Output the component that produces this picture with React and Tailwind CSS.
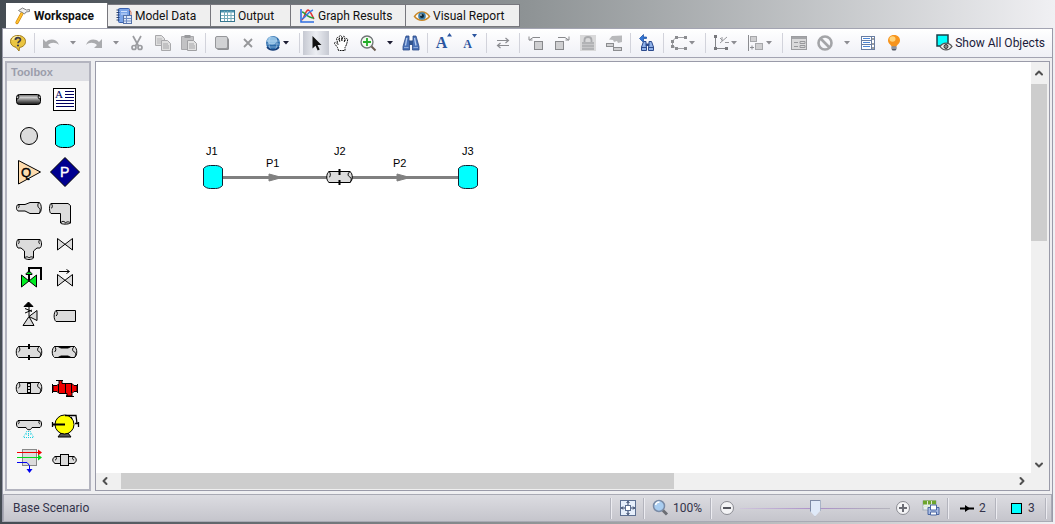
import { ChevronDown, ChevronLeft, ChevronRight, ChevronUp } from "lucide-react";

const PIPE = "#dcdcdc";

/* ---------- shared bits ---------- */

function Icon({ size = 18, children }) {
  return (
    <svg width={size} height={size} viewBox={`0 0 ${size} ${size}`} fill="none" className="shrink-0" aria-hidden="true">
      {children}
    </svg>
  );
}

function Caret({ dark }) {
  return (
    <svg width="6" height="4" viewBox="0 0 6 4" className="shrink-0" aria-hidden="true">
      <path d="M0 0h6L3 3.5z" fill={dark ? "#1d1d33" : "#8d8d92"} />
    </svg>
  );
}

function Tool({ label, active, children }) {
  return (
    <button
      type="button"
      aria-label={label}
      className={
        active
          ? "flex h-6 w-[26px] shrink-0 items-center justify-center bg-linear-to-r from-[#c6c9d2] via-[#eceef3] to-[#c6c9d2]"
          : "flex h-6 w-[26px] shrink-0 items-center justify-center"
      }
    >
      {children}
    </button>
  );
}

function DropTool({ label, dark, children }) {
  return (
    <button type="button" aria-label={label} className="flex h-6 w-[35px] shrink-0 items-center gap-px pl-[3px]">
      {children}
      <Caret dark={dark} />
    </button>
  );
}

function CaretTool({ label, dark }) {
  return (
    <button type="button" aria-label={label} className="flex h-6 w-[17px] shrink-0 items-center justify-center">
      <Caret dark={dark} />
    </button>
  );
}

function Sep() {
  return <span className="mx-[3px] h-5 w-px shrink-0 bg-[#d2d3db]" />;
}

/* ---------- tabs ---------- */

const tabs = [
  {
    name: "Workspace",
    width: "w-[102px]",
    icon: (
      <Icon>
        <path d="M8.500 5.500 3 15.500" stroke="#c87d00" strokeWidth="3.200" strokeLinecap="round" />
        <path d="M8.500 5.500 3 15.500" stroke="#ffc02e" strokeWidth="2" strokeLinecap="round" />
        <path d="m4.500 3.500 4-2.500 4 2 3-.5v2l-3.500.5-1.500 2-3-2-1.500-.5z" fill="#eee" stroke="#777" strokeWidth=".9" />
      </Icon>
    ),
  },
  {
    name: "Model Data",
    width: "w-[103px]",
    icon: (
      <Icon>
        <rect x="3.500" y="1.500" width="11" height="14" rx="1" fill="#7ba4e8" stroke="#3a62b0" />
        <path d="M6 4.500h6M6 7h6" stroke="#d0e0fc" />
        <path d="M1.500 3h3M1.500 5.500h3M1.500 8h3M1.500 10.500h3M1.500 13h3" stroke="#27406f" />
        <rect x="8.500" y="8.500" width="8" height="8" fill="#dfe8f8" stroke="#5672a8" />
        <path d="M9 11.500h7M9 14h7M11.500 9v7" stroke="#6f8cc4" />
        <path d="m14.500 3 1.500 2v3" stroke="#d3705a" />
      </Icon>
    ),
  },
  {
    name: "Output",
    width: "w-20",
    icon: (
      <Icon>
        <rect x="2.500" y="3.500" width="14" height="11" fill="#fff" stroke="#36758f" />
        <path d="M3 4.500h13" stroke="#4a93ae" strokeWidth="2" />
        <path d="M3 8.500h13M3 11.500h13M6.500 4v10M9.500 4v10M13 4v10" stroke="#76abb9" />
      </Icon>
    ),
  },
  {
    name: "Graph Results",
    width: "w-[115px]",
    icon: (
      <Icon>
        <path d="M3 2v13h13" stroke="#2f6de0" strokeWidth="1.600" />
        <path d="M4 13c3-3 3-9 6-10 2 0 3 4 6 9" stroke="#e13434" strokeWidth="1.500" />
        <path d="M4 5c3 0 5 6 12 6" stroke="#2b9c3a" strokeWidth="1.500" />
        <path d="M4 12c4-1 5-7 11-9" stroke="#3a78e6" strokeWidth="1.500" />
      </Icon>
    ),
  },
  {
    name: "Visual Report",
    width: "w-[114px]",
    icon: (
      <Icon>
        <path d="M1.500 9.500c4-6 11-6 15 0-4 5-11 5-15 0z" fill="#fffaf0" stroke="#c98726" strokeWidth="1.500" />
        <circle cx="9" cy="9" r="3.800" fill="#3c7ca8" />
        <circle cx="9" cy="9" r="2" fill="#10242f" />
        <circle cx="8" cy="8" r=".8" fill="#fff" />
      </Icon>
    ),
  },
];

function Tabs() {
  return (
    <nav className="flex h-7 items-end pl-1">
      {tabs.map((tab, i) => (
        <button
          key={tab.name}
          type="button"
          className={`${tab.width} ${
            i === 0
              ? "flex h-[25px] items-center gap-0.5 border-r border-[#77777d] bg-white pl-2 font-bold"
              : "mb-px flex h-[23px] items-center gap-0.5 border border-l-0 border-[#77777d] bg-[#efefef] pl-[7px]"
          }`}
        >
          {tab.icon}
          <span className="whitespace-nowrap">{tab.name}</span>
        </button>
      ))}
    </nav>
  );
}

/* ---------- toolbar ---------- */

function Toolbar() {
  return (
    <div className="flex h-[30px] items-center border-t border-b border-[#a3a4b2] bg-linear-to-b from-white to-[#eff0f6] pr-[7px] pl-0.5">
      <Tool label="Help">
        <Icon>
          <path d="M9 1.500c4.500 0 7.500 2.500 7.500 6 0 3.300-2.500 5.500-6 6L10 17l-3-3.700c-3.300-.6-5.500-2.800-5.500-5.800 0-3.500 3-6 7.500-6z" fill="#eac541" stroke="#9f7a1a" />
          <path d="M3.500 6C4.500 3 8 2.200 11 3" stroke="#fff3b0" strokeWidth="1.500" />
          <path d="M6.500 6c0-3 5-3 5-.3C11.500 7.500 9 7.500 9 9.300" stroke="#3c3a4c" strokeWidth="1.700" />
          <circle cx="9" cy="11.500" r="1.100" fill="#3c3a4c" />
        </Icon>
      </Tool>
      <Sep />
      <Tool label="Undo">
        <Icon>
          <path d="M1 5v9h8l-3-3c3-3 8-3 11 0-2-6-9-7-13-3z" fill="#aaabae" />
        </Icon>
      </Tool>
      <CaretTool label="Undo list" />
      <Tool label="Redo">
        <Icon>
          <path d="M17 5v9H9l3-3C9 8 4 8 1 11c2-6 9-7 13-3z" fill="#aaabae" />
        </Icon>
      </Tool>
      <CaretTool label="Redo list" />
      <Tool label="Cut">
        <Icon>
          <path d="m5 2 5.500 10M13 2 7.500 12" stroke="#9b9ca0" strokeWidth="1.700" />
          <circle cx="6" cy="13.500" r="2" stroke="#9b9ca0" strokeWidth="1.700" />
          <circle cx="12" cy="13.500" r="2" stroke="#9b9ca0" strokeWidth="1.700" />
        </Icon>
      </Tool>
      <Tool label="Copy">
        <Icon>
          <path d="M1.500 1.500h6l3 3v7h-9z" fill="#dedede" stroke="#a8a8ab" />
          <path d="M3 5h5M3 7h5M3 9h5" stroke="#b5b5b8" />
          <path d="M7.500 6.500h6l3 3v7h-9z" fill="#dedede" stroke="#a8a8ab" />
          <path d="M9 10h5M9 12h6M9 14h6" stroke="#a5a5a8" />
        </Icon>
      </Tool>
      <Tool label="Paste">
        <Icon>
          <path d="M1.500 2.500h12v13h-12z" fill="#c2c2c4" stroke="#a8a8ab" />
          <path d="M4.500 1h6v3h-6z" fill="#98999c" />
          <path d="M7.500 6.500h6l3 3v7h-9z" fill="#e2e2e2" stroke="#a0a0a3" />
          <path d="M9 10h5M9 12h6M9 14h6" stroke="#a5a5a8" />
        </Icon>
      </Tool>
      <Sep />
      <Tool label="Duplicate">
        <Icon>
          <rect x="4" y="4" width="12" height="12" rx="1.500" fill="#8f9093" />
          <rect x="2.500" y="2.500" width="12" height="12" rx="1.500" fill="#d1d2d4" stroke="#96979a" />
        </Icon>
      </Tool>
      <Tool label="Delete">
        <Icon>
          <path d="m5 5 8 8M13 5l-8 8" stroke="#96979a" strokeWidth="1.800" />
        </Icon>
      </Tool>
      <DropTool label="Web" dark>
        <Icon>
          <circle cx="9" cy="9" r="7" fill="#2c6dac" />
          <ellipse cx="8" cy="6.500" rx="5" ry="4" fill="#8fbfe4" />
          <path d="M2.500 7h13M2.500 10h13M4 13h10M6.500 2.500c-2 4-2 9 0 13M11.500 2.500c2 4 2 9 0 13" stroke="#c8e0f4" strokeOpacity=".5" />
          <path d="M3 13c3 4 9 4 12 0" stroke="#153d78" strokeWidth="1.500" />
        </Icon>
      </DropTool>
      <Sep />
      <Tool label="Select" active>
        <Icon>
          <path d="M5.500 2v12.500l3-2.800 2.200 4.800 2-.9-2.200-4.700h4z" fill="#111" />
        </Icon>
      </Tool>
      <Tool label="Pan">
        <Icon>
          <path
            d="m5.500 16.500-1-3-3-4c-.4-1.500 1.300-1.500 2-.5l1.500 1.500-1.500-6c.2-1.300 1.700-1.300 2 0l1.200 3-.4-5c.3-1.300 1.900-1.300 2.200 0l.3 4.500 1-4c.5-1.200 2-.9 2 .4l-.5 4.600 1.500-3c.8-1 2-.3 1.800.8-.6 4-1.600 6-2.600 7.700v3z"
            fill="#fff"
            stroke="#111"
            strokeDasharray="1.800 .7"
          />
        </Icon>
      </Tool>
      <Tool label="Zoom in">
        <Icon>
          <circle cx="8" cy="8" r="6" fill="#f2fbef" stroke="#707376" strokeWidth="1.300" />
          <path d="M8 4v8M4 8h8" stroke="#24ad28" strokeWidth="1.800" />
          <path d="m12.500 12.500 4 4" stroke="#6b5c50" strokeWidth="2" />
        </Icon>
      </Tool>
      <CaretTool label="Zoom list" dark />
      <Tool label="Find">
        <Icon>
          <path d="M4 2h3v4l.5 2v8H1v-3.500zM11 2h3l3 10.500V16h-6.500V8l.5-2z" fill="#4a72b8" stroke="#2c4a86" strokeWidth=".8" />
          <path d="M7 6.500h4V11H7z" fill="#31548f" />
          <path d="M4.800 4 3.500 11.500M12.500 4l1.500 7.500" stroke="#b6cdf0" strokeWidth="1.300" />
          <path d="M2 13.500h4.500M11.500 13.500H16" stroke="#8fabd9" />
        </Icon>
      </Tool>
      <Sep />
      <Tool label="Increase font size">
        <span className="flex font-['Liberation_Serif',serif] text-[16px] leading-5 font-bold text-[#2b559f]">
          A
          <svg width="5" height="4" viewBox="0 0 5 4" aria-hidden="true">
            <path d="M0 3.500h5L2.500 0z" fill="#2b559f" />
          </svg>
        </span>
      </Tool>
      <Tool label="Decrease font size">
        <span className="flex items-end font-['Liberation_Serif',serif] text-[12px] leading-4 font-bold text-[#2b559f]">
          A
          <svg width="5" height="14" viewBox="0 0 5 14" className="mb-1" aria-hidden="true">
            <path d="M0 0h5L2.500 3.500z" fill="#2b559f" />
          </svg>
        </span>
      </Tool>
      <Sep />
      <Tool label="Reverse">
        <Icon>
          <path d="M3 6.500h11M4 11.500h11M11.500 4l3 2.500-3 2.500M6.500 9l-3 2.500 3 2.500" stroke="#8b8c90" strokeWidth="1.200" />
        </Icon>
      </Tool>
      <Sep />
      <Tool label="Rotate left">
        <Icon>
          <rect x="7.500" y="7.500" width="8" height="8" fill="#cfcfd1" stroke="#88898c" />
          <path d="M13 3.500H6L2.500 6M2 2.500V6h3.500" stroke="#88898c" />
        </Icon>
      </Tool>
      <Tool label="Rotate right">
        <Icon>
          <rect x="2.500" y="7.500" width="8" height="8" fill="#cfcfd1" stroke="#88898c" />
          <path d="M5 3.500h7L15.500 6M16 2.500V6h-3.500" stroke="#88898c" />
        </Icon>
      </Tool>
      <Tool label="Lock">
        <Icon>
          <rect x="1" y="1" width="16" height="16" fill="#d9d9da" />
          <path d="M5.500 8V6c0-4 7-4 7 0v2" stroke="#a9aaad" strokeWidth="1.800" />
          <rect x="3" y="8" width="12" height="8" fill="#b2b3b5" />
          <path d="M3 10.500h12M3 13.500h12" stroke="#c6c6c8" />
        </Icon>
      </Tool>
      <Tool label="Customize">
        <Icon>
          <path d="M4 5.500 7 2l10-.500V8l-4 1-1-2-3 1-1-2z" fill="#b8b9bb" />
          <rect x="1.500" y="9.500" width="7" height="3" fill="#d0d0d2" stroke="#8c8d90" />
          <rect x="8.500" y="13.500" width="8" height="3" fill="#d0d0d2" stroke="#8c8d90" />
        </Icon>
      </Tool>
      <Sep />
      <Tool label="Find previous">
        <Icon>
          <path d="m1.500 4.500 4-4v2.500h3v1.500h-3v4z" fill="#3276d6" stroke="#174b9f" strokeWidth=".7" />
          <path d="M5.500 7.500h2.500v4l.5 1.500v3.500H3.500V13zM11 7.500h2.500l2 5.500v3.500h-5V13l.5-1.500z" fill="#8eb0e8" stroke="#2c4a8c" />
          <path d="M8 9.500h3v2.500H8z" fill="#2c4a8c" />
          <path d="M4 13.500h4M11 13.500h4" stroke="#2c4a8c" />
        </Icon>
      </Tool>
      <Sep />
      <DropTool label="Pipe segments">
        <Icon>
          <path d="M15 3.500H6L2.500 7v4L6 14.500h9" stroke="#a0a1a5" />
          <path d="M5 2h3v3H5zM14 2h3v3h-3zM1 6h3v3H1zM1 11h3v3H1zM5 13h3v3H5zM14 13h3v3h-3z" fill="#8b8c90" />
        </Icon>
      </DropTool>
      <Sep />
      <DropTool label="Scale">
        <Icon>
          <path d="M3.500 3v11.500H15" stroke="#85868a" />
          <path d="m8 9 7-6M8 4l3 3M13 8.500h4M10 3v4" stroke="#97989c" />
          <path d="M2 1h3v3H2zM2 13h3v3H2zM13 13h3v3h-3z" fill="#77787c" />
        </Icon>
      </DropTool>
      <DropTool label="Align">
        <Icon>
          <path d="M1.500 1v16M3 13.500h4M5 11.500v4" stroke="#8b8c90" />
          <rect x="3.500" y="2.500" width="6" height="5" fill="#cfcfd1" stroke="#a6a7aa" />
          <rect x="8.500" y="9.500" width="7" height="6" fill="#cfcfd1" stroke="#a6a7aa" />
        </Icon>
      </DropTool>
      <Sep />
      <Tool label="Properties">
        <Icon>
          <rect x="1.500" y="2.500" width="15" height="13" fill="#dadadb" stroke="#9c9da0" />
          <path d="M2 4h14" stroke="#a4a5a8" strokeWidth="2" />
          <path d="M4 8.500h4M10 7.500h5v2h-5zM4 12.500h4M10 11.500h5v2h-5z" stroke="#98999c" />
        </Icon>
      </Tool>
      <Tool label="Disable">
        <Icon>
          <circle cx="9" cy="9" r="6.500" stroke="#a4a5a8" strokeWidth="2.600" />
          <path d="m4.500 4.500 9 9" stroke="#a4a5a8" strokeWidth="2.600" />
        </Icon>
      </Tool>
      <CaretTool label="Disable list" />
      <Tool label="Inspector">
        <Icon>
          <rect x="2.500" y="2.500" width="13" height="13" fill="#fff" stroke="#6a7ea2" />
          <path d="M12.500 3v12M2.500 6.500h10v4h-10z" stroke="#6a7ea2" />
          <path d="M4 4.500h7M4 8.500h7M4 12.500h7" stroke="#4b86d8" />
          <path d="M14 4v2M14 9v2M14 13v2" stroke="#444" />
        </Icon>
      </Tool>
      <Tool label="Hints">
        <Icon>
          <path d="M9 1c4 0 6 2.500 6 5.500 0 3-3 4-3.500 6h-5C6 10.500 3 9.500 3 6.500 3 3.500 5 1 9 1z" fill="#f7941d" />
          <ellipse cx="7.500" cy="5" rx="3" ry="2.800" fill="#ffd37a" />
          <path d="M6.500 12.500h5V15l-1 1.500h-3L6.500 15z" fill="#555a66" />
          <path d="M6.500 14h5" stroke="#c9ced8" />
        </Icon>
      </Tool>
      <button type="button" className="ml-auto flex shrink-0 items-center gap-0.5 whitespace-nowrap text-[#1b1b3a]">
        <Icon>
          <rect x="2" y="1" width="11" height="11" fill="#00ffff" stroke="#1b3f48" strokeWidth="1.500" />
          <path d="M5 12.500c3-4.500 9-4.500 12 0-3 4.500-9 4.500-12 0z" fill="#eee" stroke="#555" strokeWidth="1.300" />
          <circle cx="11" cy="12.500" r="2" fill="#888" stroke="#333" />
        </Icon>
        Show All Objects
      </button>
    </div>
  );
}

/* ---------- toolbox ---------- */

const shapes = [
  [
    "Pipe",
    <>
      <defs>
        <linearGradient id="pipe" x2="0" y2="1">
          <stop stopColor="#666" />
          <stop offset=".3" stopColor="#ccc" />
          <stop offset=".6" stopColor="#777" />
          <stop offset="1" stopColor="#111" />
        </linearGradient>
      </defs>
      <rect x="5.500" y="13.500" width="24" height="10" rx="3" fill="url(#pipe)" />
      <path d="M6 18c2 0 2-2 1.500-4M29 18c-2 0-2-2-1.500-4" />
    </>,
  ],
  [
    "Annotation",
    <>
      <rect x="6.500" y="7.500" width="22" height="22" fill="#fff" />
      <path d="M18 10.500h9M18 13.500h9M18 16.500h9M9 19.500h18M9 22.500h18M9 25.500h18" stroke="#000060" />
      <text x="8" y="17" fontSize="11" fill="#000060" stroke="none" fontFamily="Liberation Serif, serif">
        A
      </text>
    </>,
  ],
  ["Branch", <circle cx="18" cy="19" r="8.500" fill={PIPE} />],
  ["Reservoir", <path d="M8.500 10.500c2-2 4-3 7-3h5c3 0 5 1 7 3v17c-2 2-4 3-7 3h-5c-3 0-5-1-7-3z" fill="#00ffff" />],
  [
    "Assigned Flow",
    <>
      <path d="m7.500 7.500 22 11.500-22 12z" fill="#ffdcae" />
      <text x="10" y="24" fontSize="13" fill="#000" stroke="#000" strokeWidth=".4">
        Q
      </text>
    </>,
  ],
  [
    "Assigned Pressure",
    <>
      <path d="m18 4.500 14.500 14.500L18 33.500 3.500 19z" fill="#000090" />
      <text x="13" y="24" fontSize="14" fill="#fff" stroke="#fff" strokeWidth=".4">
        P
      </text>
    </>,
  ],
  [
    "Area Change",
    <>
      <path d="M7 15.500h7l5-2h9c3 1 3 10 0 11h-9l-5-2.500H7c-2-1-2-5.500 0-6.500z" fill={PIPE} />
      <path d="M7 15.500c2 1 1 3 0 3.500M28 13.500c-2 2-1 5 0 5.500 2 1 1 4 0 5.500" />
    </>,
  ],
  [
    "Bend",
    <>
      <path d="M4 14.500h17l2.500 2V34c-2 1.500-9 1.500-10 0V24.500H4c-2-1-2-9 0-10z" fill={PIPE} />
      <path d="M4 14.500c2 2 1.500 4 0 5M13.500 34c2-3 5-1 5 0 2-2 4-1 5 0" />
    </>,
  ],
  [
    "Tee",
    <>
      <path d="M7 14.500h22c2 2 2 7 0 8.500h-3l-3.500 3v7c-2 2-7 2-9 0v-7L10 23H7c-2-2-2-6.500 0-8.500z" fill={PIPE} />
      <path d="M7 14.500c2 2 1 4 0 4.500M29 14.500c-2 2-1 4 0 4.500M13.500 33c2-2 4-1 4.500 0 2-2 4-1 4.500 0" />
    </>,
  ],
  ["Valve", <path d="m10.500 13.500 15 11.500V13.500L10.500 25z" fill={PIPE} />],
  [
    "Control Valve",
    <>
      <path d="M18 18V7h12v12" strokeWidth="2" />
      <path d="m10.500 14 15 12V14l-15 12z" fill="#00ee22" />
      <path d="M15 13.500c0-3.500 6-3.500 6 0z" fill="#00ee22" />
      <path d="M18 14v5" strokeWidth="2" />
    </>,
  ],
  [
    "Check Valve",
    <>
      <path d="m10.500 13.500 15 11.500V13.500L10.500 25z" fill={PIPE} />
      <path d="M12 10.500h10M19.500 8.500l3 2-3 2" />
    </>,
  ],
  [
    "Relief Valve",
    <>
      <path d="m18 19.500-6 9h11zM18 19.500l8-6v10z" fill={PIPE} />
      <path d="M18 19V9M14 11.500l7 3M14 16l7-3" />
      <path d="m17.500 5-4.500 4.500h9z" fill="#000" />
    </>,
  ],
  [
    "Dead End",
    <>
      <path d="M9 13.500h19.500v11H9c-2.500-2-2.500-9 0-11z" fill={PIPE} />
      <path d="M9 13.500c2 2 1.500 4.500 0 5.500" />
    </>,
  ],
  [
    "Orifice",
    <>
      <path d="M7.500 13.500h21c3 2 3 9 0 11h-21c-3-2-3-9 0-11z" fill={PIPE} />
      <path d="M7.500 13.500c2 2 1.500 4.500 0 5.500M28.500 13.500c-3 2-2 5 0 5.500 2 1 1 4 0 5.500" />
      <path d="M18 11v5M18 22v5" strokeWidth="2" />
    </>,
  ],
  [
    "Venturi",
    <>
      <path d="M7.500 13.500h20c3 2 3 9 0 11h-20c-3-2-3-9 0-11z" fill={PIPE} />
      <path d="M11 13.500h13l-3 1.500h-7zM11 24.500h13l-3-1.500h-7z" fill="#000" />
      <path d="M7.500 13.500c2 2 1.500 4.500 0 5.500M27.500 13.500c-3 2-2 5 0 5.500 2 1 1 4 0 5.500" />
    </>,
  ],
  [
    "Screen",
    <>
      <path d="M7.500 13.500h21c3 2 3 9 0 11h-21c-3-2-3-9 0-11z" fill={PIPE} />
      <path d="M7.500 13.500c2 2 1.500 4.500 0 5.500M28.500 13.500c-3 2-2 5 0 5.500 2 1 1 4 0 5.500M16.500 14v10M19.500 14v10" />
      <path d="M18 14v10" strokeDasharray="1 2" strokeWidth="2" />
    </>,
  ],
  [
    "Heat Exchanger",
    <>
      <path d="M6 16.500h4l2-2v-3h-2 5v3h10l2 2h3v6h-3l-2 2v2.500h-6 1v-2.500h-8l-2-2H6z" fill="#f00000" />
      <path d="M5.500 15v9M30.500 15v9M9 11.500h7M19 27.500h8" />
      <path d="M11.500 15v9M18.500 15v9M24.500 15v9" />
    </>,
  ],
  [
    "Spray Discharge",
    <>
      <path d="M7 15.500h22c2 1.500 2 5.500 0 7h-8c-1 3-5 3-6 0H7c-2-1.500-2-5.500 0-7z" fill={PIPE} />
      <path d="M7 15.500c2 1.500 1 3 0 3.500M29 15.500c-2 1.500-1 3 0 3.500" />
      <path d="m16 26-4 7M17.500 26v8M19 26l4 7M15 29h6M13 32.500h10" stroke="#19d0e0" strokeDasharray="1 1" />
    </>,
  ],
  [
    "Pump",
    <>
      <path d="m14 28-3 4h13l-3-4z" fill="#555" />
      <circle cx="17.500" cy="19.500" r="9.500" fill="#ffff00" />
      <path d="M5 19.500h13" strokeWidth="2" />
      <path d="M18 10.500h11l1 8M24 12l1 2M5.500 17v5M28 18.500h4M31.500 17v5" strokeWidth="1.300" />
    </>,
  ],
  [
    "Volume Balance",
    <>
      <rect x="11.500" y="8.500" width="14" height="16" fill={PIPE} stroke="#888" />
      <path d="M6 11.500h21" stroke="#f00000" />
      <path d="m27 8.500 4 3-4 3z" fill="#f00000" stroke="none" />
      <path d="M6 16.500h21" stroke="#00d818" />
      <path d="m27 13.500 4 3-4 3z" fill="#00d818" stroke="none" />
      <path d="M6 21.500h10l2.500 3V28" stroke="#0000f0" />
      <path d="M15.500 28h6l-3 4z" fill="#0000f0" stroke="none" />
    </>,
  ],
  [
    "General Component",
    <>
      <path d="M8 15.500h19c3 2 3 5 0 7H8c-3-2-3-5 0-7z" fill={PIPE} />
      <path d="M8 15.500c2 1 2 3 0 3.500M27 15.500c-2 1-2 3 0 3.500" />
      <rect x="13.500" y="13.500" width="8" height="11" fill={PIPE} />
    </>,
  ],
];

function Toolbox() {
  return (
    <aside className="w-[86px] shrink-0 border-2 border-[#b3b4bf] bg-[#f7f7f7]">
      <h2 className="h-[18px] bg-[#dddee3] pl-1 font-['Liberation_Sans',sans-serif] text-[11px] leading-[18px] font-bold text-[#9b9dab]">Toolbox</h2>
      <div className="grid grid-cols-[36px_36px] pl-1">
        {shapes.map(([name, art]) => (
          <button key={name} type="button" aria-label={name} title={name} className="size-9 font-['Liberation_Sans',sans-serif]">
            <svg width="36" height="36" viewBox="0 0 36 36" fill="none" stroke="#000">
              {art}
            </svg>
          </button>
        ))}
      </div>
    </aside>
  );
}

/* ---------- workspace ---------- */

function Reservoir({ x }) {
  return (
    <path
      d="M.5 3.500c2-2 4-3 7-3h5c3 0 5 1 7 3v17c-2 2-4 3-7 3h-5c-3 0-5-1-7-3z"
      transform={`translate(${x} 103)`}
      fill="#00ffff"
      stroke="#123"
    />
  );
}

function Network() {
  return (
    <svg width="420" height="160" className="block font-['Liberation_Sans',sans-serif] text-[11px]" role="img" aria-label="Pipe network">
      <path d="M126 115.500h106M256 115.500h106" stroke="#808080" strokeWidth="3" />
      <path d="m173 112 13 3.500-13 3.500zM301 112l13 3.500-13 3.500z" fill="#808080" stroke="#808080" />
      <Reservoir x="107" />
      <Reservoir x="362" />
      <g stroke="#000" fill="none">
        <path d="M233 109.500h21c3 2 3 9 0 11h-21c-3-2-3-9 0-11z" fill={PIPE} />
        <path d="M233 109.500c2 2 1.500 5 0 6M254 109.500c-3 2-2 5 0 5.500 2 1 1 4 0 5.500" />
        <path d="M243.500 107v6M243.500 118v5" strokeWidth="2" />
      </g>
      <g fill="#000">
        <text x="110" y="93">J1</text>
        <text x="170" y="105">P1</text>
        <text x="238" y="93">J2</text>
        <text x="297" y="105">P2</text>
        <text x="366" y="93">J3</text>
      </g>
    </svg>
  );
}

function ScrollButton({ label, className, children }) {
  return (
    <button type="button" aria-label={label} className={`flex shrink-0 items-center justify-center text-[#505050] ${className}`}>
      {children}
    </button>
  );
}

function Canvas() {
  return (
    <main className="grid min-w-0 flex-1 grid-cols-[1fr_16px] grid-rows-[1fr_16px] border border-[#9a9ba9] bg-[#f0f0f0] pr-0.5 pb-px">
      <div className="overflow-hidden bg-white">
        <Network />
      </div>
      <div className="flex flex-col">
        <ScrollButton label="Scroll up" className="h-[22px]">
          <ChevronUp size={12} strokeWidth={4} />
        </ScrollButton>
        <div className="flex-1">
          <div className="h-[42%] bg-[#cdcdcd]" />
        </div>
        <ScrollButton label="Scroll down" className="h-4">
          <ChevronDown size={12} strokeWidth={4} />
        </ScrollButton>
      </div>
      <div className="flex">
        <ScrollButton label="Scroll left" className="w-[25px] pr-2">
          <ChevronLeft size={12} strokeWidth={4} />
        </ScrollButton>
        <div className="flex-1">
          <div className="h-full w-[62%] bg-[#cdcdcd]" />
        </div>
        <ScrollButton label="Scroll right" className="w-[18px]">
          <ChevronRight size={12} strokeWidth={4} />
        </ScrollButton>
      </div>
    </main>
  );
}

/* ---------- status bar ---------- */

function StatusSep() {
  return <span className="h-[21px] w-0.5 shrink-0 border-l border-[#b3b4bd] bg-[#ececf1]" />;
}

function StatusBar() {
  return (
    <footer className="flex h-[28px] items-center border border-[#a9aab4] bg-linear-to-b from-[#dcdce1] to-[#c5c5cc] text-[#33334a]">
      <span className="flex-1 pl-[9px]">Base Scenario</span>
      <StatusSep />
      <button type="button" aria-label="Fit to window" className="flex w-[31px] justify-center">
        <Icon>
          <rect x="1.500" y="1.500" width="15" height="15" fill="#e6effb" stroke="#5c6f91" />
          <rect x="6.500" y="6.500" width="5" height="5" fill="#fff" stroke="#5c6f91" />
          <path d="M9 2v4M9 12v4M2 9h4M12 9h4M7.500 4 9 2.500 10.500 4M7.500 14 9 15.500l1.500-1.500M4 7.500 2.500 9 4 10.500M14 7.500 15.500 9 14 10.500" stroke="#27395e" />
        </Icon>
      </button>
      <StatusSep />
      <button type="button" className="flex w-[65px] items-center gap-1 pl-1.5">
        <Icon>
          <circle cx="8" cy="7" r="5.500" fill="#a9cdf0" stroke="#7a8ba6" strokeWidth="1.500" />
          <path d="M4.500 6c.5-2 2-3 4-3" stroke="#fff" strokeWidth="1.500" />
          <path d="m12 11.500 4 4" stroke="#6b6d74" strokeWidth="3" />
        </Icon>
        100%
      </button>
      <StatusSep />
      <div className="flex w-[235px] items-center pl-1.5">
        <button type="button" aria-label="Zoom out">
          <Icon>
            <circle cx="9" cy="9" r="6.500" fill="#f4f4f6" stroke="#8a8b92" />
            <path d="M5 9h8" stroke="#55565e" strokeWidth="2" />
          </Icon>
        </button>
        <input
          type="range"
          aria-label="Zoom level"
          defaultValue="50"
          className="mx-1 h-[18px] w-[150px] appearance-none bg-transparent [&::-webkit-slider-runnable-track]:h-px [&::-webkit-slider-runnable-track]:bg-linear-to-r [&::-webkit-slider-runnable-track]:from-[#cfc6dc] [&::-webkit-slider-runnable-track]:via-[#ab8fc8] [&::-webkit-slider-runnable-track]:to-[#b4b4bc] [&::-webkit-slider-thumb]:-mt-2 [&::-webkit-slider-thumb]:h-[17px] [&::-webkit-slider-thumb]:w-[11px] [&::-webkit-slider-thumb]:appearance-none [&::-webkit-slider-thumb]:border [&::-webkit-slider-thumb]:border-[#7d8aa5] [&::-webkit-slider-thumb]:bg-[#dfe9f8] [&::-webkit-slider-thumb]:[clip-path:polygon(0_0,100%_0,100%_65%,50%_100%,0_65%)]"
        />
        <button type="button" aria-label="Zoom in">
          <Icon>
            <circle cx="9" cy="9" r="6.500" fill="#f4f4f6" stroke="#8a8b92" />
            <path d="M5 9h8M9 5v8" stroke="#6b6c74" strokeWidth="2" />
          </Icon>
        </button>
        <button type="button" aria-label="Save view" className="ml-2.5">
          <Icon>
            <rect x="1" y="2" width="13" height="9" fill="#e8eef2" stroke="#a5afb8" />
            <path d="M1 3.500h13" stroke="#6da52c" strokeWidth="4" />
            <path d="M5.500 2v9M9.500 2v9M1 7.500h13" stroke="#dfe9d4" />
            <path d="M6 8.500h11v7H6z" fill="#a9bce4" stroke="#4a66a2" />
            <path d="M8.500 6h6v5h-6zM8.500 13h6v3h-6z" fill="#fff" stroke="#4a66a2" />
          </Icon>
        </button>
      </div>
      <StatusSep />
      <span className="flex w-[46px] items-center gap-1 pl-2.5">
        <svg width="16" height="9" viewBox="0 0 16 9" aria-hidden="true">
          <path d="M1 4.500h14" stroke="#000" strokeWidth="2" />
          <path d="m6 1 5 3.500L6 8z" fill="#000" />
        </svg>
        2
      </span>
      <StatusSep />
      <span className="flex w-12 items-center gap-1.5 pl-3.5">
        <span className="size-[11px] border border-black bg-[#00ffff]" />
        3
      </span>
      <StatusSep />
      <span className="w-1" />
    </footer>
  );
}

export default function App() {
  return (
    <div className="flex min-h-screen flex-col bg-linear-to-r from-[#454c53] via-[#8e9395] to-[#f0f0f3] px-0.5 pb-0.5 font-[Roboto,'Open_Sans',sans-serif] text-[12px] leading-4 text-[#111]">
      <Tabs />
      <div className="flex flex-1 flex-col border-x border-[#9a9ba9] bg-[#efeff1]">
        <Toolbar />
        <div className="flex flex-1 gap-1 px-0.5 py-[3px]">
          <Toolbox />
          <Canvas />
        </div>
        <StatusBar />
      </div>
    </div>
  );
}
